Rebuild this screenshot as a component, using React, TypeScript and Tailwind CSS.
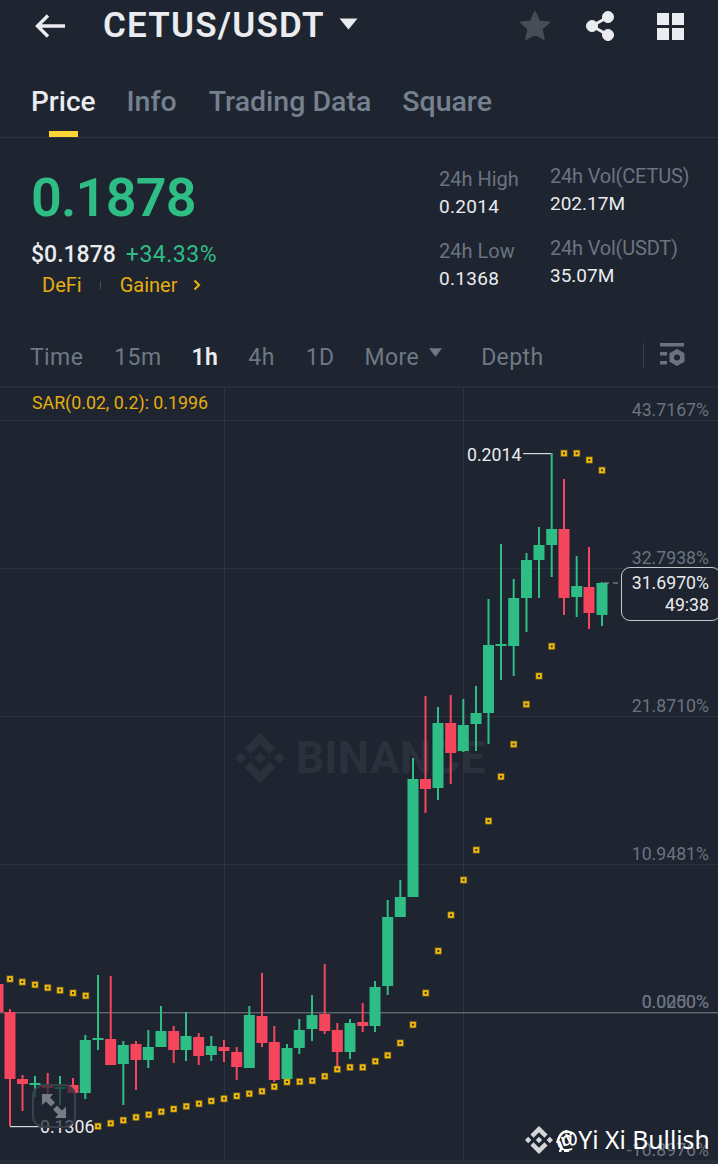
const BINANCE = "M16.624 13.9202l2.7175 2.7154-7.353 7.353-7.353-7.352 2.7175-2.7164 4.6355 4.6595 4.6356-4.6595zm4.6366-4.6366L24 12l-2.7154 2.7164L18.5682 12l2.6924-2.7164zm-9.272.001l2.7163 2.6914-2.7164 2.7174v-.001L9.2721 12l2.7164-2.7154zm-9.2722-.001L5.4088 12l-2.6914 2.6924L0 12l2.7164-2.7164zM11.9885.0115l7.353 7.329-2.7174 2.7154-4.6356-4.6356-4.6355 4.6595-2.7174-2.7154 7.353-7.353z";

const G = "#2ebd85";
const R = "#f6465d";
// [x, wickTop, wickBottom, bodyTop, bodyBottom, up]
const candles: [number, number, number, number, number, boolean][] = [
  [-2, 975, 1012, 984, 1012, false],
  [10, 1009, 1126, 1012, 1079, false],
  [22.5, 1075, 1111, 1079, 1084, false],
  [35, 1076, 1097, 1083, 1085, true],
  [47.7, 1073, 1095, 1086, 1088, false],
  [60, 1076, 1105, 1087, 1089, true],
  [73, 1078, 1093, 1085, 1093, false],
  [85.3, 1035, 1099, 1040, 1093, true],
  [98, 975, 1050, 1038, 1040, true],
  [110.7, 976, 1065, 1039, 1065, false],
  [123.3, 1041, 1105, 1045, 1064, true],
  [136, 1041, 1090, 1044, 1060, false],
  [148.3, 1030, 1068, 1047, 1060, true],
  [161, 1006, 1047, 1031, 1047, true],
  [173.7, 1026, 1063, 1031, 1050, false],
  [186, 1012, 1061, 1036, 1050, true],
  [198.7, 1033, 1065, 1037, 1056, false],
  [211.3, 1036, 1061, 1046, 1055, true],
  [224, 1040, 1062, 1047, 1051, false],
  [236.7, 1047, 1080, 1052, 1067, false],
  [249.3, 1006, 1068, 1015, 1068, true],
  [262, 973, 1047, 1016, 1043, false],
  [274.3, 1026, 1082, 1042, 1080, false],
  [287, 1044, 1079, 1048, 1079, true],
  [299.3, 1019, 1054, 1030, 1048, true],
  [312, 995, 1041, 1015, 1029, true],
  [324.7, 964, 1034, 1014, 1031, false],
  [337.3, 1023, 1070, 1030, 1052, false],
  [350, 1019, 1059, 1023, 1052, true],
  [362.7, 1003, 1032, 1022, 1026, false],
  [375, 981, 1032, 987, 1026, true],
  [387.7, 900, 995, 917, 986, true],
  [400.3, 880, 917, 897, 917, true],
  [413, 758, 897, 779, 897, true],
  [425.5, 696, 813, 779, 789, false],
  [438, 707, 800, 723, 788, true],
  [450.7, 695, 784, 723, 753, false],
  [463.3, 699, 752, 725, 751, true],
  [476, 686, 751, 713, 724, true],
  [488.5, 599, 744, 645, 713, true],
  [501, 544, 680, 644, 646, true],
  [513.7, 579, 676, 598, 646, true],
  [526.5, 553, 632, 560, 598, true],
  [539, 527, 598, 545, 560, true],
  [551.7, 453, 577, 529, 545, true],
  [564, 479, 615, 529, 598, false],
  [576.7, 556, 617, 586, 597, true],
  [589, 547, 629, 587, 613, false],
  [602, 582, 626, 583, 615, true],
];

const dots: [number, number][] = [
  [10, 979], [22.3, 982], [35, 984.7], [47.7, 987.7], [60, 990.3], [73, 993], [85.7, 995.7],
  [98, 1126.3], [110.7, 1123.3], [123.3, 1120.3], [136, 1117.3], [148.7, 1114.7], [161.3, 1111.7],
  [173.7, 1109], [186.3, 1106.3], [199, 1103.7], [211.3, 1101], [224, 1098.7], [236.7, 1096],
  [249.3, 1093.7], [262, 1091.3], [274.3, 1086.7], [287, 1082], [299.7, 1081.7], [312.3, 1080.7],
  [324.7, 1076.3], [337.3, 1069.3], [350, 1067.3], [362.7, 1067.3], [375.3, 1061.3], [387.7, 1055.3],
  [400.3, 1043], [413, 1024.7], [425.7, 993], [438.3, 951], [451, 915], [463.6, 880], [476.3, 850],
  [488.5, 821], [501, 776.7], [513.7, 744.3], [526.3, 704.3], [539, 676], [551.7, 646.3],
  [564, 453.3], [576.7, 453.3], [589.3, 460], [602, 470.3],
];

function Chart() {
  return (
    <svg className="absolute left-0 top-0 h-full w-full" viewBox="0 388 718 776">
      {[420, 568, 716, 864].map((y) => (
        <rect key={y} x={0} y={y} width={718} height={1} fill="#2c333e" />
      ))}
      <rect x={224} y={388} width={1} height={772} fill="#2c333e" />
      <rect x={463} y={388} width={1} height={772} fill="#2c333e" />
      <rect x={0} y={1012} width={718} height={1.4} fill="#5f6672" />
      <rect x={0} y={1160} width={718} height={4} fill="#272d38" />
      {candles.map(([x, wt, wb, bt, bb, up]) => (
        <g key={x} fill={up ? G : R}>
          <rect x={x - 1} y={wt} width={2} height={wb - wt} />
          <rect x={x - 5.5} y={bt} width={11} height={bb - bt} />
        </g>
      ))}
      {dots.map(([x, y]) => (
        <g key={x}>
          <rect x={x - 3.5} y={y - 3.5} width={7} height={7} fill="#f0b90b" opacity={0.45} />
          <rect x={x - 2.8} y={y - 2.8} width={5.6} height={5.6} fill="#f0b90b" />
          <rect x={x - 1} y={y - 1} width={2} height={2} fill="#3a3420" />
        </g>
      ))}
      <rect x={523} y={453} width={28} height={1.2} fill="#d5d8dc" />
      <rect x={10} y={1126} width={30} height={1.2} fill="#d5d8dc" />
      <line x1={604} y1={583} x2={621} y2={583} stroke="#9aa0a8" strokeWidth={1} strokeDasharray="5 4" />
    </svg>
  );
}

const axisLabels = ["43.7167%", "32.7938%", "21.8710%", "10.9481%", "0.0250%", "-10.8976%"];

export default function App() {
  return (
    <div className="flex h-[1164px] w-[718px] flex-col overflow-hidden bg-[#1e2530] font-['Roboto',sans-serif] text-[#eaecef]">
      {/* Top bar */}
      <div className="flex h-[52px] items-center">
        <svg className="ml-[34px] h-[28px] w-[32px]" viewBox="0 0 32 28" fill="none" stroke="#eaecef" strokeWidth="3.4">
          <path d="M31 14H4M14 3.500 3.500 14 14 24.500" />
        </svg>
        <span className="ml-[37px] text-[35px] font-semibold tracking-[1.2px]">CETUS/USDT</span>
        <svg className="ml-[14px] mb-[4px] h-[12px] w-[19px]" viewBox="0 0 19 12" fill="#eaecef">
          <path d="M0.500 0.500h18L9.500 11.500z" />
        </svg>
        <svg className="ml-[161px] h-[32px] w-[32px]" viewBox="0 0 24 24" fill="#474d57" stroke="#474d57" strokeWidth="1.400" strokeLinejoin="round">
          <path d="M12 1.500l3.100 7 7.400.800-5.500 5 1.600 7.400L12 18l-6.600 3.700L7 14.300l-5.500-5 7.400-.800z" />
        </svg>
        <svg className="ml-[35px] h-[30px] w-[28px]" viewBox="0 0 28 30" fill="#eaecef" stroke="#eaecef">
          <circle cx="22" cy="6" r="5.500" />
          <circle cx="6" cy="15" r="5.500" />
          <circle cx="22" cy="24" r="5.500" />
          <path d="M22 6 6 15 22 24" strokeWidth="3" fill="none" />
        </svg>
        <div className="ml-[43px] grid h-[27px] w-[27px] grid-cols-2 gap-[3px]">
          <div className="bg-[#eaecef]" />
          <div className="bg-[#eaecef]" />
          <div className="bg-[#eaecef]" />
          <div className="bg-[#eaecef]" />
        </div>
      </div>

      {/* Tabs */}
      <div className="flex h-[86px] items-start border-b border-[#2f3641] pl-[31px] pt-[33px] text-[28.5px] font-medium leading-[33px] text-[#76808e]">
        <div className="relative h-[52px] text-[28px] text-[#eaecef]">
          Price
          <div className="absolute bottom-0 left-[18px] h-[6px] w-[29px] bg-[#fcd535]" />
        </div>
        <span className="ml-[31px]">Info</span>
        <span className="ml-[32px]">Trading Data</span>
        <span className="ml-[31px]">Square</span>
      </div>

      {/* Price info */}
      <div className="flex h-[190px]">
        <div className="ml-[31px] w-[408px]">
          <div className="mt-[26px] text-[54px] font-semibold leading-[68px] tracking-[-0.8px] text-[#2ebd85]">0.1878</div>
          <div className="mt-[9px] flex items-center text-[23px] leading-[28px]">
            <span className="font-medium">$0.1878</span>
            <span className="ml-[10px] tracking-[0.5px] text-[#2ebd85]">+34.33%</span>
          </div>
          <div className="mt-[3px] flex items-center pl-[11px] text-[20px] leading-[26px] text-[#e5ae0c]">
            <span>DeFi</span>
            <div className="ml-[18px] h-[8px] w-[1px] bg-[#474d57]" />
            <span className="ml-[19px]">Gainer</span>
            <svg className="ml-[15px] h-[12px] w-[10px]" viewBox="0 0 10 12" fill="none" stroke="#e5ae0c" strokeWidth="2.200">
              <path d="M2.500 1.500 7 6l-4.500 4.500" />
            </svg>
          </div>
        </div>
        <div className="w-[111px] pt-[28px]">
          <div className="text-[20px] leading-[26px] text-[#6b7380]">24h High</div>
          <div className="mt-[2px] text-[19px] leading-[26px] tracking-[0.3px]">0.2014</div>
          <div className="mt-[18px] text-[20px] leading-[26px] text-[#6b7380]">24h Low</div>
          <div className="mt-[2px] text-[19px] leading-[26px] tracking-[0.3px]">0.1368</div>
        </div>
        <div className="pt-[25px]">
          <div className="text-[20px] leading-[26px] tracking-[-0.2px] text-[#6b7380]">24h Vol(CETUS)</div>
          <div className="mt-[2px] text-[19px] leading-[26px]">202.17M</div>
          <div className="mt-[18px] text-[20px] leading-[26px] tracking-[-0.2px] text-[#6b7380]">24h Vol(USDT)</div>
          <div className="mt-[2px] text-[19px] leading-[26px]">35.07M</div>
        </div>
      </div>

      {/* Interval row */}
      <div className="flex h-[60px] items-start border-b-2 border-[#272e39] pl-[30px] pt-[14px] text-[23px] leading-[32px] tracking-[0.4px] text-[#6f7885]">
        <span>Time</span>
        <span className="ml-[31px]">15m</span>
        <span className="ml-[30px] font-semibold text-[#eaecef]">1h</span>
        <span className="ml-[30px]">4h</span>
        <span className="ml-[31px]">1D</span>
        <span className="ml-[30px]">More</span>
        <svg className="ml-[10px] mt-[6px] h-[9px] w-[13px]" viewBox="0 0 14 9" fill="#6f7885">
          <path d="M0 0h14L7 9z" />
        </svg>
        <span className="ml-[39px]">Depth</span>
        <div className="ml-[99px] mt-[1px] h-[25px] w-[1px] bg-[#3a414c]" />
        <svg className="ml-[16px] mt-[1px] h-[26px] w-[25px]" viewBox="0 0 25 26" fill="#6b7380">
          <path d="M0 0h24v3.500H0zM0 9h7v3.500H0zM0 18h7v3.500H0z" />
          <path fillRule="evenodd" d="M17 6l7.500 4.300v8.400L17 23l-7.500-4.300v-8.400zm0 5.500a3 3 0 1 0 0 6 3 3 0 0 0 0-6z" />
        </svg>
      </div>

      {/* Chart */}
      <div className="relative flex-1">
        <div className="absolute left-[235px] top-[345px] flex items-center gap-[11px] text-[#2a313c]">
          <svg className="h-[50px] w-[50px]" viewBox="0 0 24 24" fill="#2a313c">
            <path d={BINANCE} />
          </svg>
          <span className="text-[44px] font-bold leading-[50px] tracking-[0.5px]">BINANCE</span>
        </div>

        <Chart />

        <div className="absolute left-[32px] top-[5px] text-[17.8px] leading-[20px] text-[#e5ae0c]">SAR(0.02, 0.2): 0.1996</div>

        <div className="absolute right-[9px] top-[12px] flex flex-col items-end text-[17.7px] leading-[20px] text-[#6b7380]">
          {axisLabels.map((t) => (
            <div key={t} className="h-[148.100px]">{t}</div>
          ))}
        </div>
        <div className="absolute right-[9px] top-[604px] text-[17.7px] leading-[20px] text-[#6b7380]">0.0000%</div>

        <div className="absolute left-[467px] top-[57px] text-[17.7px] leading-[20px] text-[#eaecef]">0.2014</div>
        <div className="absolute left-[40px] top-[729px] text-[17.7px] leading-[20px] text-[#eaecef]">0.1306</div>

        <div className="absolute left-[621px] top-[179px] flex h-[54px] w-[100px] flex-col items-end justify-center rounded-[9px] border border-[#c4c8cc] bg-[#1e2530] pr-[11px] text-[17.7px] leading-[22px] text-[#eaecef]">
          <div>31.6970%</div>
          <div>49:38</div>
        </div>

        <div className="absolute left-[32px] top-[696px] h-[44px] w-[44px] rounded-[12px] border-2 border-[#3a414c] bg-[#1e2530]/70">
          <svg className="absolute left-[8px] top-[8px] h-[24px] w-[24px]" viewBox="0 0 24 24" fill="#757c87">
            <path d="M0 0h11L8 3.500 13 8.500 9 12.500 4 7.500 0 11z" />
            <path d="M24 24H13l3-3.500L11 15.500l4-4 5 5 4-4z" />
          </svg>
        </div>

        {/* Bottom watermark */}
        <div className="absolute left-[525px] top-[738px] flex items-center">
          <svg className="h-[28px] w-[28px]" viewBox="0 0 24 24" fill="#d4d6d9">
            <path d={BINANCE} />
          </svg>
          <span className="relative ml-[3px] font-['Noto_Sans',sans-serif] text-[24.7px] leading-[28px] text-white">
            @Yi Xi Bullish
            <svg className="absolute left-0 top-[3px] h-[24px] w-[17px]" viewBox="0 0 17 24" fill="none" stroke="#ffffff">
              <path d="M1 14c2-7 4-11 9-12 3 0 5 2 5 4M4 23c0-2 1-3 3-3M8 22h5M3 12l3 7M6 8l3 9M10 5l4 8" strokeWidth="2.200" />
            </svg>
          </span>
        </div>
      </div>
    </div>
  );
}
